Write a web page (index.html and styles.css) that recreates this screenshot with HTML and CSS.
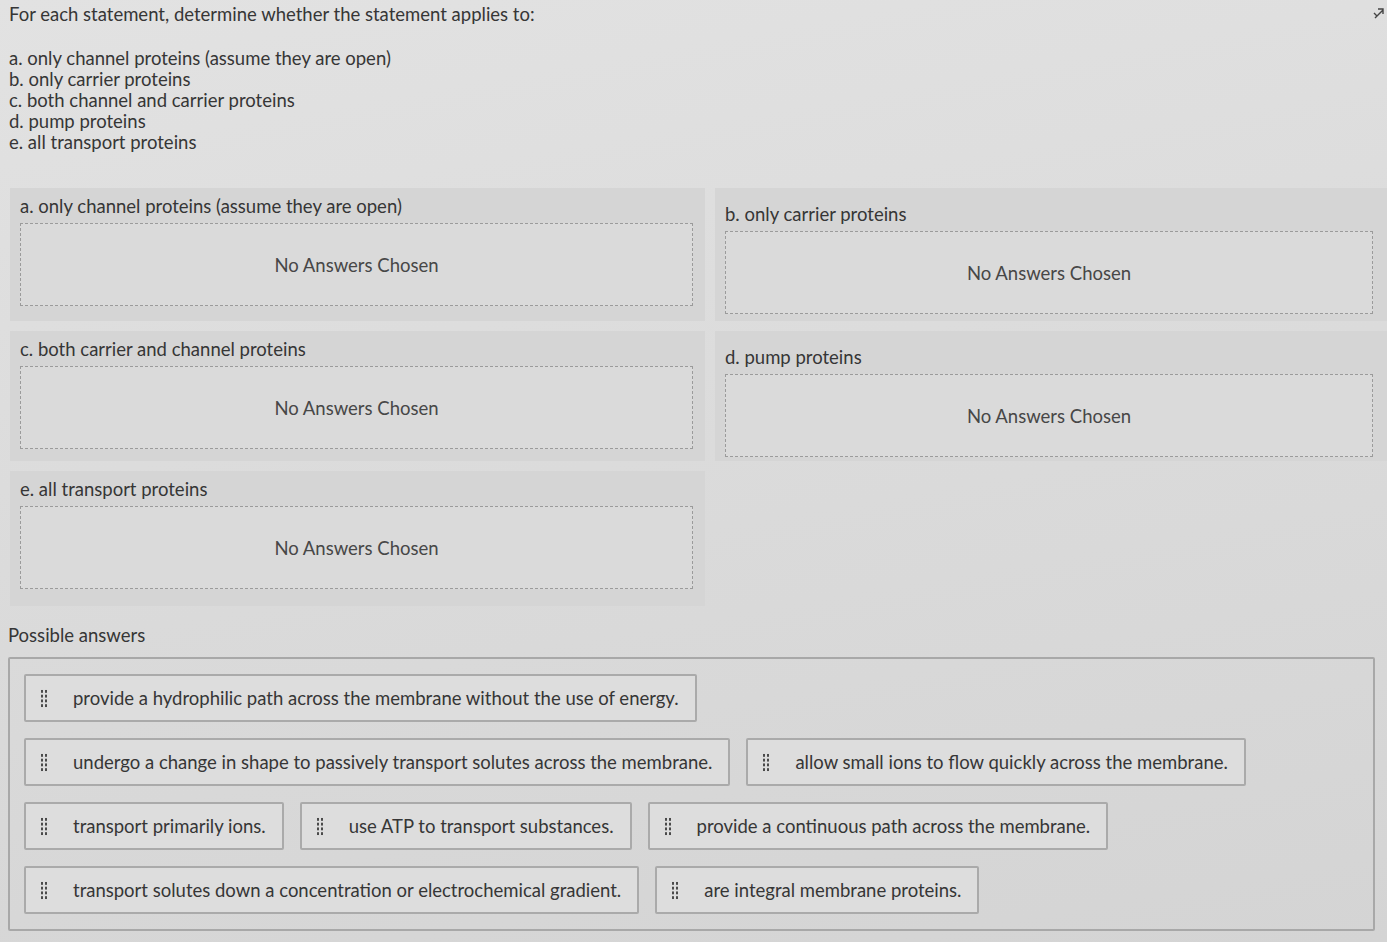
FILE: index.html
```html
<!DOCTYPE html>
<html lang="en">

<head>
    <meta charset="UTF-8">
    <meta name="viewport" content="width=device-width, initial-scale=1.0">
    <title>Transport proteins</title>
    <link rel="stylesheet" href="styles.css">
</head>

<body>
    <div class="page">
        <div class="prompt">
            <div class="prompt-title">For each statement, determine whether the statement applies to:</div>
            <svg class="corner-icon" width="12" height="14" viewBox="0 0 12 14">
                <path d="M2 12 L10 4 M5 3 L10 3 L10 8 M1 7 L4 10" stroke="#444" stroke-width="1.4" fill="none" />
            </svg>
            <ul class="choices">
                <li>a. only channel proteins (assume they are open)</li>
                <li>b. only carrier proteins</li>
                <li>c. both channel and carrier proteins</li>
                <li>d. pump proteins</li>
                <li>e. all transport proteins</li>
            </ul>
        </div>

        <div class="zones">
            <div class="zone">
                <div class="zone-label">a. only channel proteins (assume they are open)</div>
                <div class="drop">No Answers Chosen</div>
            </div>
            <div class="zone zone-right">
                <div class="zone-label">b. only carrier proteins</div>
                <div class="drop">No Answers Chosen</div>
            </div>
            <div class="zone">
                <div class="zone-label">c. both carrier and channel proteins</div>
                <div class="drop">No Answers Chosen</div>
            </div>
            <div class="zone zone-right">
                <div class="zone-label">d. pump proteins</div>
                <div class="drop">No Answers Chosen</div>
            </div>
            <div class="zone">
                <div class="zone-label">e. all transport proteins</div>
                <div class="drop">No Answers Chosen</div>
            </div>
        </div>

        <div class="answers-title">Possible answers</div>
        <div class="answers">
            <div class="chip"><span class="handle"></span>provide a hydrophilic path across the membrane without the use of energy.</div>
            <div class="chip"><span class="handle"></span>undergo a change in shape to passively transport solutes across the membrane.</div>
            <div class="chip"><span class="handle"></span>allow small ions to flow quickly across the membrane.</div>
            <div class="chip"><span class="handle"></span>transport primarily ions.</div>
            <div class="chip"><span class="handle"></span>use ATP to transport substances.</div>
            <div class="chip"><span class="handle"></span>provide a continuous path across the membrane.</div>
            <div class="chip"><span class="handle"></span>transport solutes down a concentration or electrochemical gradient.</div>
            <div class="chip"><span class="handle"></span>are integral membrane proteins.</div>
        </div>
    </div>
</body>

</html>
```

FILE: styles.css
```css
body {
    margin: 0;
    font-family: Lato, "Open Sans", sans-serif;
    font-size: 18.5px;
    color: #363636;
    background-color: #dcdcdc;
}

.page {
    width: 100%;
    min-height: 100vh;
    overflow: hidden;
    background: linear-gradient(170deg, #e2e2e2 0%, #dadada 55%, #d4d4d4 100%);
}

.prompt {
    position: relative;
    padding: 2px 9px 0;
}

.prompt-title {
    line-height: 24px;
}

.corner-icon {
    position: absolute;
    top: 6px;
    right: 2px;
}

.choices {
    list-style: none;
    margin: 22px 0 0;
    padding: 0;
    line-height: 21px;
}

.zones {
    display: grid;
    grid-template-columns: 695px 1fr;
    grid-template-rows: 133px 130px 135px;
    gap: 10px;
    margin: 35px 0 0 10px;
}

.zone {
    display: flex;
    flex-direction: column;
    padding: 6px 12px 0 10px;
    background-color: #d5d5d5;
}

.zone-right {
    padding-top: 14px;
    padding-right: 14px;
}

.zone-label {
    line-height: 24px;
    margin-bottom: 5px;
}

.drop {
    height: 81px;
    display: flex;
    justify-content: center;
    align-items: center;
    border: 1px dashed #9b9b9b;
    background-color: #dadada;
    color: #474747;
}

.answers-title {
    margin: 17px 0 0 8px;
    line-height: 24px;
}

.answers {
    display: flex;
    flex-wrap: wrap;
    gap: 16px;
    margin: 10px 12px 0 8px;
    padding: 15px 14px;
    border: 2px solid #a8a8a8;
    border-radius: 2px;
}

.chip {
    display: flex;
    align-items: center;
    height: 48px;
    box-sizing: border-box;
    padding: 0 16px 0 14px;
    border: 2px solid #aaaaaa;
    border-radius: 2px;
    background-color: #dddddd;
    white-space: nowrap;
}

.handle {
    width: 8px;
    height: 19px;
    margin-right: 25px;
    background-image: radial-gradient(circle, #4a4a4a 1.3px, transparent 1.5px);
    background-size: 4px 4.75px;
}
```
